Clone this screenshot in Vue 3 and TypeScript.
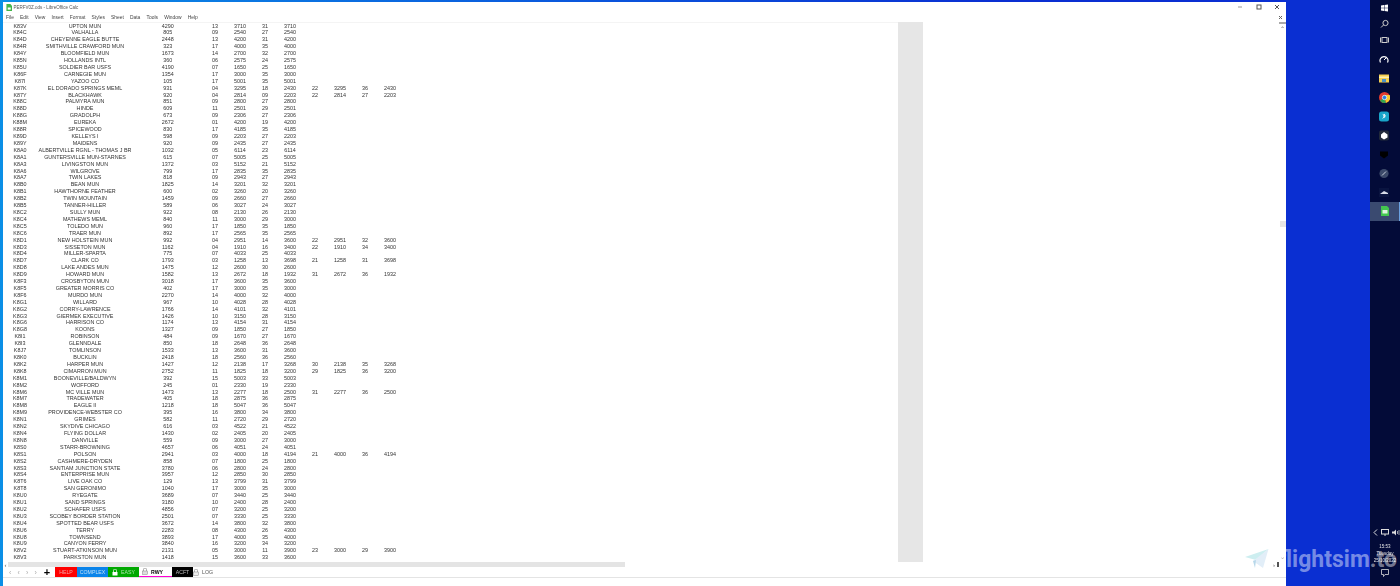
<script setup lang="ts">
const menus = ['File', 'Edit', 'View', 'Insert', 'Format', 'Styles', 'Sheet', 'Data', 'Tools', 'Window', 'Help']

const raw = `K83V|UPTON MUN|4290|13|3710|31|3710
K84C|VALHALLA|805|09|2540|27|2540
K84D|CHEYENNE EAGLE BUTTE|2448|13|4200|31|4200
K84R|SMITHVILLE CRAWFORD MUN|323|17|4000|35|4000
K84Y|BLOOMFIELD MUN|1673|14|2700|32|2700
K85N|HOLLANDS INTL|360|06|2575|24|2575
K85U|SOLDIER BAR USFS|4190|07|1650|25|1650
K86F|CARNEGIE MUN|1354|17|3000|35|3000
K87I|YAZOO CO|105|17|5001|35|5001
K87K|EL DORADO SPRINGS MEML|931|04|3295|18|2430|22|3295|36|2430
K87Y|BLACKHAWK|920|04|2814|09|2203|22|2814|27|2203
K88C|PALMYRA MUN|851|09|2800|27|2800
K88D|HINDE|609|11|2501|29|2501
K88G|GRADOLPH|673|09|2306|27|2306
K88M|EUREKA|2672|01|4200|19|4200
K88R|SPICEWOOD|830|17|4185|35|4185
K89D|KELLEYS I|598|09|2203|27|2203
K89Y|MAIDENS|920|09|2435|27|2435
K8A0|ALBERTVILLE RGNL - THOMAS J BR|1032|05|6114|23|6114
K8A1|GUNTERSVILLE MUN-STARNES|615|07|5005|25|5005
K8A3|LIVINGSTON MUN|1372|03|5152|21|5152
K8A6|WILGROVE|799|17|2835|35|2835
K8A7|TWIN LAKES|818|09|2943|27|2943
K8B0|BEAN MUN|1825|14|3201|32|3201
K8B1|HAWTHORNE FEATHER|600|02|3260|20|3260
K8B2|TWIN MOUNTAIN|1459|09|2660|27|2660
K8B5|TANNER-HILLER|589|06|3027|24|3027
K8C2|SULLY MUN|922|08|2130|26|2130
K8C4|MATHEWS MEML|840|11|3000|29|3000
K8C5|TOLEDO MUN|960|17|1850|35|1850
K8C6|TRAER MUN|892|17|2565|35|2565
K8D1|NEW HOLSTEIN MUN|992|04|2951|14|3600|22|2951|32|3600
K8D3|SISSETON MUN|1162|04|1910|16|3400|22|1910|34|3400
K8D4|MILLER-SPARTA|775|07|4033|25|4033
K8D7|CLARK CO|1793|03|1258|13|3698|21|1258|31|3698
K8D8|LAKE ANDES MUN|1475|12|2600|30|2600
K8D9|HOWARD MUN|1582|13|2672|18|1932|31|2672|36|1932
K8F3|CROSBYTON MUN|3018|17|3600|35|3600
K8F5|GREATER MORRIS CO|402|17|3000|35|3000
K8F6|MURDO MUN|2270|14|4000|32|4000
K8G1|WILLARD|967|10|4028|28|4028
K8G2|CORRY-LAWRENCE|1766|14|4101|32|4101
K8G3|GIERMEK EXECUTIVE|1426|10|3150|28|3150
K8G6|HARRISON CO|1174|13|4154|31|4154
K8G8|KOONS|1327|09|1850|27|1850
K8I1|ROBINSON|484|09|1670|27|1670
K8I3|GLENNDALE|850|18|2648|36|2648
K8J7|TOMLINSON|1533|13|3600|31|3600
K8K0|BUCKLIN|2418|18|2560|36|2560
K8K2|HARPER MUN|1427|12|2138|17|3268|30|2138|35|3268
K8K8|CIMARRON MUN|2752|11|1825|18|3200|29|1825|36|3200
K8M1|BOONEVILLE/BALDWYN|392|15|5003|33|5003
K8M2|WOFFORD|245|01|2330|19|2330
K8M6|MC VILLE MUN|1473|13|2277|18|2500|31|2277|36|2500
K8M7|TRADEWATER|405|18|2875|36|2875
K8M8|EAGLE II|1218|18|5047|36|5047
K8M9|PROVIDENCE-WEBSTER CO|395|16|3800|34|3800
K8N1|GRIMES|582|11|2720|29|2720
K8N2|SKYDIVE CHICAGO|616|03|4522|21|4522
K8N4|FLYING DOLLAR|1430|02|2405|20|2405
K8N8|DANVILLE|559|09|3000|27|3000
K8S0|STARR-BROWNING|4657|06|4051|24|4051
K8S1|POLSON|2941|03|4000|18|4194|21|4000|36|4194
K8S2|CASHMERE-DRYDEN|858|07|1800|25|1800
K8S3|SANTIAM JUNCTION STATE|3780|06|2800|24|2800
K8S4|ENTERPRISE MUN|3957|12|2850|30|2850
K8T6|LIVE OAK CO|129|13|3799|31|3799
K8T8|SAN GERONIMO|1040|17|3000|35|3000
K8U0|RYEGATE|3689|07|3440|25|3440
K8U1|SAND SPRINGS|3180|10|2400|28|2400
K8U2|SCHAFER USFS|4856|07|3200|25|3200
K8U3|SCOBEY BORDER STATION|2501|07|3330|25|3330
K8U4|SPOTTED BEAR USFS|3672|14|3800|32|3800
K8U6|TERRY|2283|08|4300|26|4300
K8U8|TOWNSEND|3893|17|4000|35|4000
K8U9|CANYON FERRY|3840|16|3200|34|3200
K8V2|STUART-ATKINSON MUN|2131|05|3000|11|3900|23|3000|29|3900
K8V3|PARKSTON MUN|1418|15|3600|33|3600`

const rows: string[][] = raw.split('\n').map((line) => line.split('|'))
</script>

<template>
  <div class="desktop">
    <div class="accent"></div>
    <div class="window">
      <div class="titlebar">
        <svg class="doc-icon" width="6" height="7" viewBox="0 0 7 8">
          <path d="M0.5 0H5L7 2V8H0.5Z" fill="#43b649" />
          <rect x="2" y="4" width="3.5" height="2.5" fill="#fff" />
        </svg>
        <span class="title">PERFV0Z.ods - LibreOffice Calc</span>
        <div class="controls">
          <svg width="6" height="6" viewBox="0 0 6 6"><path d="M1 3H5" stroke="#999" /></svg>
          <svg width="6" height="6" viewBox="0 0 6 6"><rect x="1" y="1" width="4" height="4" fill="none" stroke="#555" /></svg>
          <svg width="6" height="6" viewBox="0 0 6 6"><path d="M1 1L5 5M5 1L1 5" stroke="#555" /></svg>
        </div>
      </div>
      <div class="menubar">
        <span v-for="m in menus" :key="m">{{ m }}</span>
        <svg class="menu-close" width="5" height="5" viewBox="0 0 5 5"><path d="M1 1L4 4M4 1L1 4" stroke="#666" /></svg>
      </div>

      <div class="sheet">
        <div class="table">
          <div v-for="r in rows" :key="r[0]" class="row">
            <span v-for="(cell, i) in r" :key="i">{{ cell }}</span>
          </div>
        </div>
        <div class="grey-col"></div>
        <div class="vscroll">
          <div class="v-top"></div>
          <span class="v-arrow">⌃</span>
          <div class="v-thumb"></div>
          <span class="v-arrow v-down">⌄</span>
        </div>
      </div>

      <div class="hscroll">
        <span class="h-arrow">‹</span>
        <div class="h-track"></div>
        <span class="h-right">›</span>
        <div class="h-mark"></div>
      </div>

      <div class="tabbar">
        <div class="tab-nav">
          <span>‹</span><span>‹</span><span>›</span><span>›</span>
        </div>
        <span class="tab-add">+</span>
        <div class="tab help">HELP</div>
        <div class="tab complex">COMPLEX</div>
        <div class="tab easy">
          <svg width="6" height="7" viewBox="0 0 6 7"><path d="M1.5 3V1.5A1.5 1.5 0 0 1 4.5 1.5V3" fill="none" stroke="#fff" stroke-width=".7" /><rect x="0.5" y="3" width="5" height="3.5" fill="#fff" /></svg>
          EASY
        </div>
        <div class="tab rwy">
          <svg width="6" height="7" viewBox="0 0 6 7"><path d="M1.5 3V1.5A1.5 1.5 0 0 1 4.5 1.5V3" fill="none" stroke="#888" stroke-width=".7" /><rect x="0.5" y="3" width="5" height="3.5" fill="#ddd" stroke="#888" stroke-width=".5" /></svg>
          RWY
        </div>
        <div class="tab acft">ACFT</div>
        <div class="tab log">
          <svg width="6" height="7" viewBox="0 0 6 7"><path d="M1.5 3V1.5A1.5 1.5 0 0 1 4.5 1.5V3" fill="none" stroke="#888" stroke-width=".7" /><rect x="0.5" y="3" width="5" height="3.5" fill="#eee" stroke="#888" stroke-width=".5" /></svg>
          LOG
        </div>
      </div>
      <div class="statusbar"></div>
    </div>

    <div class="taskbar">
      <div class="task-icons">
        <svg width="7" height="7" viewBox="0 0 7 7"><path d="M0 1L3 .5V3.3H0ZM3.5 .4L7 0V3.3H3.5ZM0 3.7H3V6.5L0 6ZM3.5 3.7H7V7L3.5 6.6Z" fill="#fff" /></svg>
        <svg width="9" height="9" viewBox="0 0 9 9"><circle cx="5.5" cy="3.5" r="2.6" fill="none" stroke="#ccc" /><path d="M3.5 5.5L1 8" stroke="#ccc" /></svg>
        <svg width="9" height="7" viewBox="0 0 9 7"><rect x="2" y="1" width="5" height="5" fill="none" stroke="#ccc" /><path d="M.5 1V6M8.5 1V6" stroke="#ccc" /></svg>
        <svg width="10" height="9" viewBox="0 0 10 9"><path d="M1.5 7.5A4 4 0 1 1 8.5 7.5" fill="none" stroke="#fff" stroke-width="1.2" /><path d="M5 5L7 3" stroke="#fff" /></svg>
        <svg width="10" height="8" viewBox="0 0 10 8"><rect width="10" height="8" fill="#f4cf52" /><rect x="0" y="2" width="10" height="1.5" fill="#fff2b0" /><rect x="3" y="4.5" width="4" height="3" fill="#4a90c8" /></svg>
        <svg width="11" height="11" viewBox="0 0 11 11"><circle cx="5.5" cy="5.5" r="5.5" fill="#e33b2e" /><path d="M5.5 5.5L1 8.5A5.5 5.5 0 0 0 7 10.8Z" fill="#2fa84f" /><path d="M5.5 3H10.6A5.5 5.5 0 0 1 7 10.8Z" fill="#f7c92f" /><circle cx="5.5" cy="5.5" r="2.2" fill="#2a7de1" stroke="#fff" stroke-width=".7" /></svg>
        <svg width="10" height="10" viewBox="0 0 10 10"><rect width="10" height="10" rx="2.5" fill="#19a5c9" /><path d="M3.7 3L6.3 5 5 6V2.5L6.3 3.7 3.7 7" fill="none" stroke="#fff" stroke-width=".8" /></svg>
        <svg width="10" height="10" viewBox="0 0 10 10"><rect width="10" height="10" rx="2" fill="#222a3a" /><path d="M2 4L5 1.5L8.5 4V7L5 9L2 7Z" fill="#fff" /></svg>
        <svg width="10" height="8" viewBox="0 0 10 8"><path d="M1 1H9V5L5 8L1 5Z" fill="#000" /></svg>
        <svg width="10" height="10" viewBox="0 0 10 10"><circle cx="5" cy="5" r="4.6" fill="#3c4a6a" /><path d="M3 7L7 3" stroke="#c8d0dc" /></svg>
        <svg width="10" height="9" viewBox="0 0 10 9"><rect width="10" height="9" fill="#0a1440" /><path d="M1 6L5 3L9 5V6Z" fill="#d8dce8" /></svg>
        <div class="task-active">
          <svg width="8" height="10" viewBox="0 0 8 10"><path d="M0 0H6L8 2V10H0Z" fill="#43c64f" /><rect x="1.5" y="4" width="5" height="3.5" fill="#dff5e0" /></svg>
        </div>
      </div>
      <div class="tray">
        <div class="tray-row">
          <svg width="5" height="7" viewBox="0 0 5 7"><path d="M4 .5L1 3.5L4 6.5" fill="none" stroke="#ddd" /></svg>
          <svg width="8" height="7" viewBox="0 0 8 7"><rect x=".5" y=".5" width="7" height="4.5" fill="none" stroke="#ddd" /><path d="M4 5V7" stroke="#ddd" /></svg>
          <svg width="8" height="7" viewBox="0 0 8 7"><path d="M0 2.5H2L4 .5V6.5L2 4.5H0Z" fill="#ddd" /><path d="M5.5 2V5M7 1V6" stroke="#ddd" stroke-width=".7" /></svg>
        </div>
        <div class="clock">
          <span>15:53</span>
          <span>Tuesday</span>
          <span>25/10/2022</span>
        </div>
        <svg class="notify" width="8" height="8" viewBox="0 0 8 8"><path d="M.5 .5H7.5V5.5H4L2.5 7.5V5.5H.5Z" fill="none" stroke="#ddd" stroke-width=".8" /></svg>
      </div>
    </div>

    <div class="watermark">
      <svg width="24" height="20" viewBox="0 0 24 20">
        <path d="M0 8L23.5 0L11 11Z" fill="#cdeef0" />
        <path d="M8 12L23.5 0L18 19Z" fill="#e2eef8" />
        <path d="M8 12L11 11L10 19Z" fill="#b8d8ea" />
      </svg>
      <span>flightsim.to</span>
    </div>
  </div>
</template>

<style scoped>
.desktop {
  position: relative;
  display: flex;
  width: 1400px;
  height: 586px;
  overflow: hidden;
  padding-top: 2px;
  box-sizing: border-box;
  background: linear-gradient(90deg, #0b8fe6 0, #0a55dc 600px, #0a2fd2 1000px);
  font-family: "Liberation Sans", Arial, sans-serif;
}

.accent {
  width: 3px;
  flex: none;
}

.window {
  width: 1283px;
  flex: none;
  display: flex;
  flex-direction: column;
  background: #fff;
  color: #444;
  filter: blur(0.3px);
}

.titlebar {
  height: 10px;
  display: flex;
  align-items: center;
  padding-left: 3px;
  gap: 1.5px;
  font-size: 4.5px;
  color: #555;
}

.title {
  flex: 1;
}

.controls {
  display: flex;
  gap: 12.5px;
  padding-right: 6px;
}

.menubar {
  height: 10px;
  display: flex;
  align-items: center;
  gap: 6.2px;
  padding-left: 3px;
  font-size: 4.9px;
  color: #444;
}

.menu-close {
  margin-left: auto;
  margin-right: 3px;
}

.sheet {
  height: 540px;
  display: flex;
}

.table {
  width: 895px;
  flex: none;
  padding-top: 0.5px;
  box-sizing: border-box;
  box-shadow: inset 0 1px #f4f4f4;
}

.row {
  height: 6.92px;
  line-height: 6.92px;
  display: grid;
  grid-template-columns: 34px 96px 69.5px repeat(8, 25px);
  font-size: 5.4px;
  color: #333;
  text-align: center;
  white-space: nowrap;
}

.grey-col {
  width: 25px;
  flex: none;
  background: #e6e6e6;
}

.vscroll {
  margin-left: auto;
  width: 7px;
  display: flex;
  flex-direction: column;
  align-items: center;
}

.v-top {
  width: 7px;
  height: 2px;
  background: #aaa;
}

.v-arrow {
  font-size: 6px;
  line-height: 6px;
  color: #666;
  margin-top: 2px;
}

.v-thumb {
  width: 6px;
  height: 6px;
  background: #e6e6e6;
  margin-top: 189px;
}

.v-down {
  margin-top: auto;
  margin-bottom: 2px;
}

.hscroll {
  height: 5px;
  display: flex;
  align-items: center;
  font-size: 6px;
  color: #555;
}

.h-arrow {
  width: 5px;
  text-align: center;
}

.h-track {
  width: 617px;
  height: 5px;
  background: #e4e4e4;
}

.h-right {
  margin-left: auto;
  margin-right: 2px;
}

.h-mark {
  width: 2px;
  height: 5px;
  background: #555;
  margin-right: 7px;
}

.tabbar {
  height: 10px;
  display: flex;
  align-items: stretch;
  font-size: 5.2px;
  border-bottom: 1px solid #e4e4e4;
}

.tab-nav {
  width: 40px;
  display: flex;
  align-items: center;
  gap: 6.2px;
  padding-left: 6px;
  box-sizing: border-box;
  font-size: 7px;
  color: #aaa;
}

.tab-add {
  width: 8px;
  margin-right: 4px;
  text-align: center;
  font-size: 11px;
  font-weight: bold;
  line-height: 10px;
  color: #000;
}

.tab {
  display: flex;
  align-items: center;
  justify-content: center;
  gap: 3px;
  color: #e8e8e8;
}

.help {
  width: 22px;
  background: #ff0000;
  color: #f4a0a0;
}

.complex {
  width: 31px;
  background: #0a84ea;
  color: #bfe0f8;
}

.easy {
  width: 31px;
  background: #00a800;
  color: #a8e0a8;
}

.rwy {
  width: 33px;
  background: #fff;
  color: #000;
  font-weight: bold;
  border-bottom: 1px solid #ff00d4;
  box-sizing: border-box;
  justify-content: flex-start;
  padding-left: 3px;
}

.acft {
  width: 21px;
  background: #000;
  color: #bbb;
}

.log {
  width: 20px;
  color: #555;
}

.statusbar {
  flex: 1;
}

.taskbar {
  margin-left: auto;
  margin-top: -2px;
  width: 30px;
  height: 586px;
  flex: none;
  background: #030b38;
  display: flex;
  flex-direction: column;
  justify-content: space-between;
  filter: blur(0.3px);
}

.task-icons {
  display: flex;
  flex-direction: column;
  align-items: center;
  padding-right: 2px;
}

.task-icons > svg {
  height: 19px;
}

.task-icons > svg:nth-child(-n + 3) {
  height: 16px;
}

.task-icons > svg:nth-child(4) {
  margin-top: 1.5px;
}

.task-active {
  width: 30px;
  height: 19px;
  margin-right: -2px;
  background: #3a4a70;
  border-right: 1px solid #6aa0e0;
  box-sizing: border-box;
  display: flex;
  align-items: center;
  justify-content: center;
}

.tray {
  display: flex;
  flex-direction: column;
  align-items: center;
  padding-bottom: 9px;
  color: #e4e4e4;
}

.tray-row {
  display: flex;
  gap: 3px;
  align-items: center;
  margin-bottom: 7px;
  padding-left: 2px;
}

.clock {
  display: flex;
  flex-direction: column;
  align-items: center;
  font-size: 4.5px;
  line-height: 7px;
  white-space: nowrap;
}

.notify {
  margin-top: 5px;
}

.watermark {
  position: absolute;
  left: 1245px;
  top: 549px;
  display: flex;
  align-items: flex-start;
  color: rgba(255, 255, 255, 0.45);
  font-family: Roboto, sans-serif;
  font-size: 23px;
  font-weight: 700;
  line-height: 20px;
  white-space: nowrap;
}

.watermark span {
  margin-left: 9px;
  margin-top: 1px;
}
</style>
